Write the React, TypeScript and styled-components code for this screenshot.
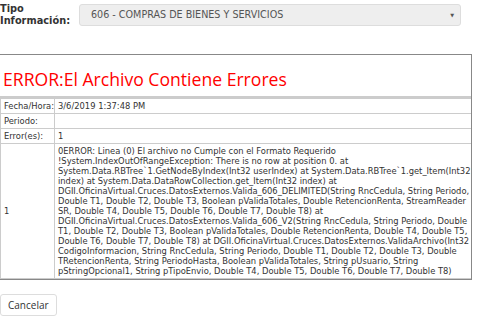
import styled, { createGlobalStyle } from 'styled-components';

const GlobalStyle = createGlobalStyle`
	body {
		margin: 0;
		background: #fff;
		font-family: 'DejaVu Sans', Verdana, sans-serif;
		font-size: 8.35px;
		line-height: 10px;
		color: #333;
	}
`;

// traza tal como la muestra el servidor, una entrada por renglon
const detalle = [
	'0ERROR: Linea (0) El archivo no Cumple con el Formato Requerido',
	'!System.IndexOutOfRangeException: There is no row at position 0. at',
	'System.Data.RBTree`1.GetNodeByIndex(Int32 userIndex) at System.Data.RBTree`1.get_Item(Int32',
	'index) at System.Data.DataRowCollection.get_Item(Int32 index) at',
	'DGII.OficinaVirtual.Cruces.DatosExternos.Valida_606_DELIMITED(String RncCedula, String Periodo,',
	'Double T1, Double T2, Double T3, Boolean pValidaTotales, Double RetencionRenta, StreamReader',
	'SR, Double T4, Double T5, Double T6, Double T7, Double T8) at',
	'DGII.OficinaVirtual.Cruces.DatosExternos.Valida_606_V2(String RncCedula, String Periodo, Double',
	'T1, Double T2, Double T3, Boolean pValidaTotales, Double RetencionRenta, Double T4, Double T5,',
	'Double T6, Double T7, Double T8) at DGII.OficinaVirtual.Cruces.DatosExternos.ValidaArchivo(Int32',
	'CodigoInformacion, String RncCedula, String Periodo, Double T1, Double T2, Double T3, Double',
	'TRetencionRenta, String PeriodoHasta, Boolean pValidaTotales, String pUsuario, String',
	'pStringOpcional1, String pTipoEnvio, Double T4, Double T5, Double T6, Double T7, Double T8)',
];

const App = () => {
	return (
		<Page>
			<GlobalStyle />
			<FieldRow>
				<Label>
					Tipo
					<br />
					Información:
				</Label>
				<Select>
					<span>606 - COMPRAS DE BIENES Y SERVICIOS</span>
					<Caret>▼</Caret>
				</Select>
			</FieldRow>

			<ResultBox>
				<Title>ERROR:El Archivo Contiene Errores</Title>
				<Table>
					<tbody>
						<tr>
							<HeadCell>Fecha/Hora:</HeadCell>
							<Cell>3/6/2019 1:37:48 PM</Cell>
						</tr>
						<tr>
							<HeadCell>Periodo:</HeadCell>
							<Cell></Cell>
						</tr>
						<tr>
							<HeadCell>Error(es):</HeadCell>
							<Cell>1</Cell>
						</tr>
						<tr>
							<HeadCell>1</HeadCell>
							<Cell>
								{detalle.map((linea, i) => (
									<Line key={i}>{linea}</Line>
								))}
							</Cell>
						</tr>
					</tbody>
				</Table>
			</ResultBox>

			<Button type='button'>Cancelar</Button>
		</Page>
	);
};

export default App;

const Page = styled.div`
	width: 490px;
	padding-top: 3px;
`;

const FieldRow = styled.div`
	display: flex;
	align-items: center;
	width: 461px;
`;

const Label = styled.label`
	width: 79px;
	font-size: 9.8px;
	font-weight: bold;
	line-height: 12px;
	color: #333;
`;

const Select = styled.div`
	flex: 1;
	display: flex;
	align-items: center;
	justify-content: space-between;
	height: 22px;
	box-sizing: border-box;
	padding: 0 6px 0 11px;
	background-color: #eee;
	border: 1px solid #ddd;
	border-radius: 3px;
	font-size: 9.6px;
	color: #555;
`;

const Caret = styled.span`
	font-size: 5px;
	color: #555;
`;

const ResultBox = styled.div`
	width: 472px;
	box-sizing: border-box;
	margin-top: 27px;
	border: 1px solid #888;
	border-left: none;
`;

const Title = styled.h2`
	margin: 0;
	padding: 13px 3px 6px;
	font-family: 'Open Sans', 'Noto Sans', sans-serif;
	font-size: 17.6px;
	font-weight: normal;
	line-height: 22px;
	color: #f00;
	border-bottom: 2px solid #ccc;
`;

const Table = styled.table`
	width: 100%;
	table-layout: fixed;
	border-collapse: collapse;
	font-size: 8.35px;
	line-height: 10px;
`;

const Cell = styled.td`
	border: 1px solid #ccc;
	padding: 2px 3px;
	font-size: 8.35px;
	line-height: 10px;
	vertical-align: middle;
	&:last-child {
		border-right: none;
	}
`;

const HeadCell = styled(Cell)`
	width: 49px;
	padding-right: 1px;
	white-space: nowrap;
`;

const Line = styled.div`
	white-space: nowrap;
`;

const Button = styled.button`
	margin-top: 14px;
	height: 22px;
	padding: 0 7px;
	background: #fff;
	border: 1px solid #ddd;
	border-radius: 3px;
	font-family: 'Open Sans', 'Noto Sans', sans-serif;
	font-size: 10px;
	color: #333;
	cursor: pointer;
`;
